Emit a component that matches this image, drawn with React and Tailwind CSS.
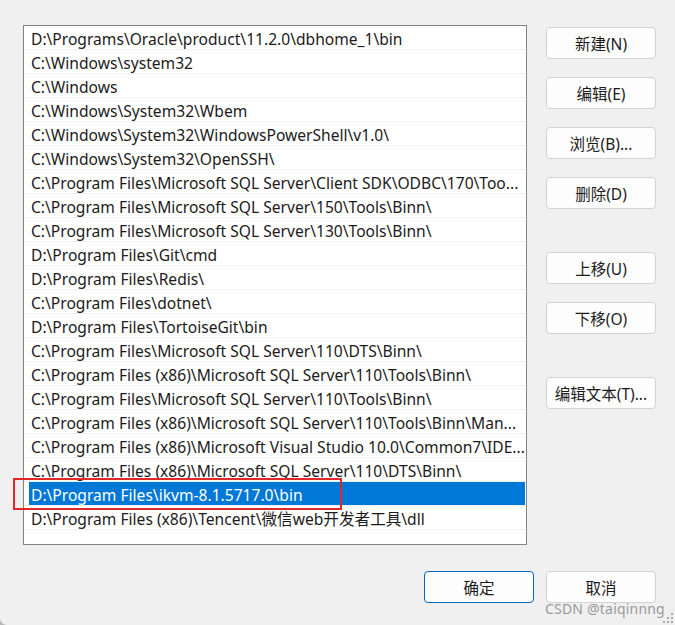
import { useState } from "react";

const paths = [
  "D:\\Programs\\Oracle\\product\\11.2.0\\dbhome_1\\bin",
  "C:\\Windows\\system32",
  "C:\\Windows",
  "C:\\Windows\\System32\\Wbem",
  "C:\\Windows\\System32\\WindowsPowerShell\\v1.0\\",
  "C:\\Windows\\System32\\OpenSSH\\",
  "C:\\Program Files\\Microsoft SQL Server\\Client SDK\\ODBC\\170\\Too...",
  "C:\\Program Files\\Microsoft SQL Server\\150\\Tools\\Binn\\",
  "C:\\Program Files\\Microsoft SQL Server\\130\\Tools\\Binn\\",
  "D:\\Program Files\\Git\\cmd",
  "D:\\Program Files\\Redis\\",
  "C:\\Program Files\\dotnet\\",
  "D:\\Program Files\\TortoiseGit\\bin",
  "C:\\Program Files\\Microsoft SQL Server\\110\\DTS\\Binn\\",
  "C:\\Program Files (x86)\\Microsoft SQL Server\\110\\Tools\\Binn\\",
  "C:\\Program Files\\Microsoft SQL Server\\110\\Tools\\Binn\\",
  "C:\\Program Files (x86)\\Microsoft SQL Server\\110\\Tools\\Binn\\Man...",
  "C:\\Program Files (x86)\\Microsoft Visual Studio 10.0\\Common7\\IDE...",
  "C:\\Program Files (x86)\\Microsoft SQL Server\\110\\DTS\\Binn\\",
  "D:\\Program Files\\ikvm-8.1.5717.0\\bin",
  "D:\\Program Files (x86)\\Tencent\\微信web开发者工具\\dll",
];

// side buttons, mt = gap above
const sideButtons = [
  { label: "新建(N)", mt: "mt-0" },
  { label: "编辑(E)", mt: "mt-[18px]" },
  { label: "浏览(B)...", mt: "mt-[18px]" },
  { label: "删除(D)", mt: "mt-[18px]" },
  { label: "上移(U)", mt: "mt-[43px]" },
  { label: "下移(O)", mt: "mt-[18px]" },
  { label: "编辑文本(T)...", mt: "mt-[43px]" },
];

const Btn = ({ label, className = "", primary = false }) => (
  <button
    className={
      "w-[110px] h-[32px] pt-[3px] rounded-[4px] bg-[#fdfdfd] text-[15.5px] text-[#1b1b1b] flex items-center justify-center " +
      (primary ? "border border-[#0067c0] " : "border border-[#d3d3d3] ") +
      className
    }
  >
    {label}
  </button>
);

const App = () => {
  const [selected, setselected] = useState(19);
  return (
    <div
      className="w-[675px] h-[625px] bg-[#b8b8b8] overflow-hidden"
      style={{ fontFamily: '"Noto Sans", "Noto Sans CJK SC", sans-serif' }}
    >
      <div className="relative w-full h-full bg-[#f0f0f0] rounded-bl-[7px] pl-[23px] pt-[25px]">
        <div className="flex">
          {/* path list */}
          <div className="w-[504px] h-[520px] bg-white border border-[#838383] overflow-hidden">
            {paths.map((p, i) => (
              <div
                key={i}
                onClick={() => setselected(i)}
                className="h-[24px] border-b border-[#f0f0f0] flex"
              >
                <div
                  className={
                    "flex-1 ml-[5px] mr-[1px] pl-[2px] pt-[4px] flex items-center whitespace-nowrap overflow-hidden text-[15.6px] " +
                    (selected === i ? "bg-[#0078d7] text-white" : "text-[#1b1b1b]")
                  }
                >
                  {p}
                </div>
              </div>
            ))}
          </div>
          {/* side buttons */}
          <div className="ml-[19px] pt-[2px] flex flex-col">
            {sideButtons.map((b) => (
              <Btn key={b.label} label={b.label} className={b.mt} />
            ))}
          </div>
        </div>
        {/* bottom buttons */}
        <div className="mt-[26px] pl-[401px] flex gap-[12px]">
          <Btn label="确定" primary />
          <Btn label="取消" />
        </div>

        {/* red annotation box */}
        <div className="absolute left-[13px] top-[478px] w-[329px] h-[32px] border-2 border-[#e0282b]" />

        {/* watermark */}
        <div className="absolute left-[545px] top-[598px] text-[14px] text-[#9a9a9a] tracking-[0.2px]">
          CSDN @taiqinnng
        </div>

        {/* resize grip */}
        <svg className="absolute right-[1px] bottom-[1px]" width="12" height="12" viewBox="0 0 12 12">
          {[
            [9, 1], [9, 5], [5, 5], [9, 9], [5, 9], [1, 9],
          ].map(([x, y], i) => (
            <rect key={i} x={x} y={y} width="2" height="2" fill="#a8a8a8" />
          ))}
        </svg>
      </div>
    </div>
  );
};

export default App;
